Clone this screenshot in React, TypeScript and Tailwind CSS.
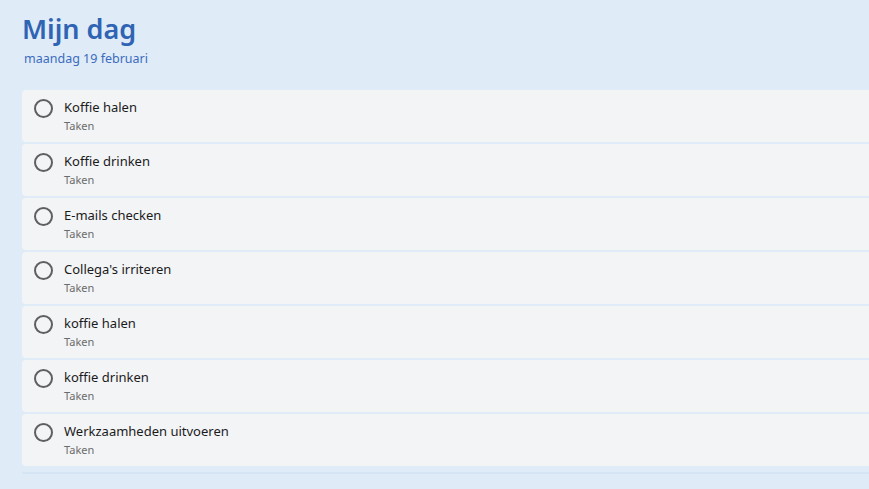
import React from "react";

const tasks = [
  "Koffie halen",
  "Koffie drinken",
  "E-mails checken",
  "Collega's irriteren",
  "koffie halen",
  "koffie drinken",
  "Werkzaamheden uitvoeren",
];

export default function App() {
  return (
    <div
      className="w-[869px] h-[489px] overflow-hidden bg-[#dfebf7]"
      style={{ fontFamily: '"Segoe UI", "Noto Sans", "Open Sans", sans-serif' }}
    >
      <div className="pl-[22px] pt-[9px]">
        <h1 className="text-[27px] leading-[40px] font-semibold text-[#2f63b3]">Mijn dag</h1>
        <div className="mt-[1px] pl-[2px] text-[12.5px] leading-[18px] text-[#3b6cc0]">maandag 19 februari</div>
      </div>
      <div className="mt-[22px] ml-[22px] flex flex-col gap-[2px]">
        {tasks.map((t) => (
          <div key={t} className="h-[52px] bg-[#f3f4f6] rounded-l-[4px] flex items-start">
            <div className="ml-[12px] mt-[9px] w-[19px] h-[19px] rounded-full border-2 border-[#5f5f5f]" />
            <div className="ml-[11px] mt-[8px] flex flex-col">
              <div className="text-[13px] leading-[19px] text-[#1b1b1b]">{t}</div>
              <div className="text-[11px] leading-[16px] text-[#6b6b6b] mt-[1px]">Taken</div>
            </div>
          </div>
        ))}
        <div className="h-[2px] mt-[4px] bg-[#d6e5f4]" />
      </div>
    </div>
  );
}
